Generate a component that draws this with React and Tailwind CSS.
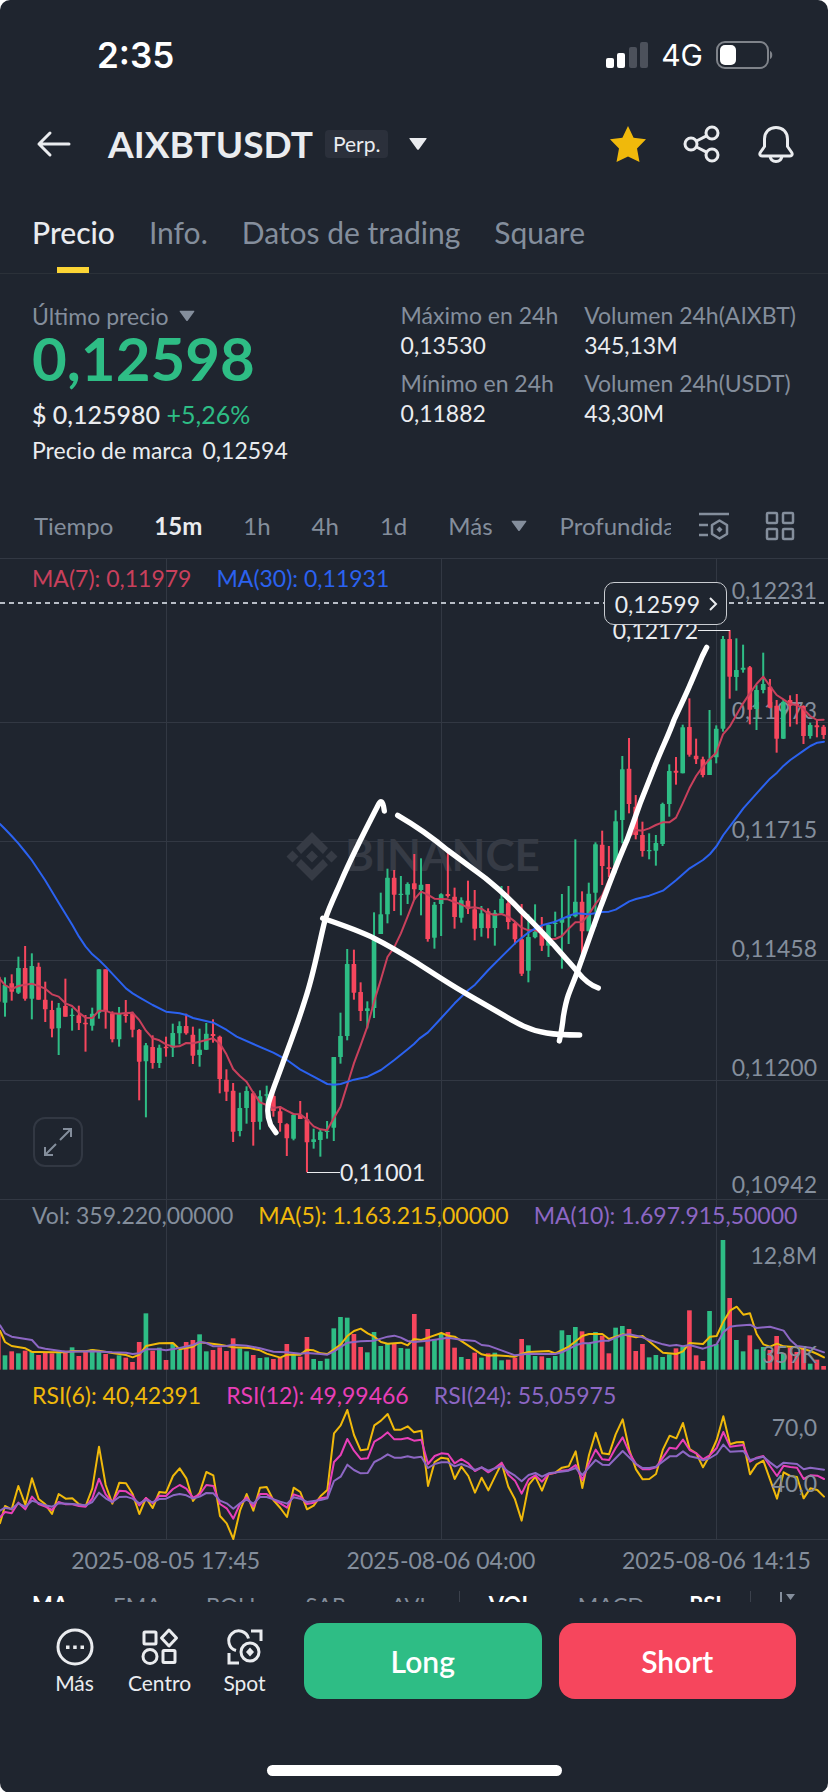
import React, { useState } from 'react';

const UP = '#2ebd85';
const DOWN = '#f6465d';
const YELLOW = '#f0b90b';
const PINK = '#e83fb8';
const PURPLE = '#8d67c4';

// Plot space is three units per pixel, one candle every STEP units
const STEP = 20.13;
const HALF = 1242;

// [high, body top, body bottom, low, rising, volume top]
const candles = [
  [337, 350, 425, 425, 0, 430], [352, 375, 428, 470, 1, 496], [343, 370, 395, 422, 0, 484], [290, 324, 398, 402, 1, 490],
  [258, 324, 416, 422, 0, 482], [280, 318, 416, 478, 1, 485], [308, 320, 419, 419, 0, 495], [365, 419, 448, 486, 0, 488],
  [422, 450, 506, 532, 0, 490], [429, 443, 505, 585, 1, 484], [356, 438, 470, 470, 0, 482], [445, 464, 468, 512, 1, 472],
  [437, 466, 489, 510, 0, 498], [465, 488, 493, 575, 0, 486], [443, 461, 497, 512, 1, 478], [328, 328, 458, 476, 1, 485],
  [328, 328, 454, 506, 0, 492], [454, 460, 538, 547, 0, 506], [441, 460, 538, 560, 1, 496], [420, 463, 468, 488, 0, 503],
  [455, 461, 509, 532, 0, 516], [507, 510, 605, 721, 0, 456], [549, 556, 604, 772, 1, 370], [526, 561, 609, 626, 0, 482],
  [554, 563, 609, 624, 1, 473], [530, 560, 565, 590, 0, 510], [491, 519, 563, 591, 1, 460], [484, 498, 520, 553, 1, 480],
  [461, 498, 520, 524, 0, 456], [500, 524, 587, 612, 0, 450], [506, 569, 585, 620, 1, 433], [489, 521, 569, 570, 1, 484],
  [478, 522, 528, 548, 0, 480], [527, 530, 657, 700, 0, 472], [628, 659, 695, 723, 0, 483], [669, 692, 815, 846, 0, 445],
  [698, 744, 813, 829, 1, 475], [679, 693, 744, 791, 1, 484], [694, 700, 786, 857, 0, 495], [691, 709, 785, 809, 1, 504],
  [677, 703, 707, 740, 1, 502], [700, 708, 753, 770, 0, 507], [738, 754, 789, 815, 0, 503], [790, 793, 835, 888, 0, 462],
  [760, 764, 836, 841, 1, 495], [723, 765, 777, 777, 0, 500], [758, 778, 847, 937, 0, 441], [806, 838, 846, 866, 1, 507],
  [808, 815, 840, 890, 1, 513], [783, 812, 816, 836, 1, 506], [591, 591, 803, 843, 1, 415], [458, 528, 591, 611, 1, 381],
  [267, 312, 528, 541, 1, 383], [269, 312, 398, 419, 0, 432], [367, 396, 453, 483, 0, 471], [424, 445, 453, 505, 1, 487],
  [157, 230, 444, 474, 1, 426], [98, 163, 222, 222, 1, 468], [26, 53, 163, 190, 1, 462], [30, 53, 104, 153, 0, 460],
  [48, 101, 105, 166, 1, 474], [67, 72, 104, 132, 1, 476], [-18, 70, 88, 120, 0, 372], [-5, 74, 90, 166, 1, 470],
  [72, 72, 237, 245, 0, 417], [126, 134, 233, 266, 1, 447], [100, 103, 132, 228, 1, 430], [-25, 102, 108, 113, 0, 426],
  [83, 110, 171, 206, 0, 473], [112, 121, 173, 188, 1, 501], [62, 122, 146, 162, 0, 507], [90, 148, 206, 241, 0, 488],
  [138, 160, 204, 230, 1, 503], [145, 154, 205, 235, 0, 490], [150, 158, 204, 257, 1, 488], [78, 116, 160, 163, 1, 511],
  [78, 130, 186, 208, 0, 509], [185, 190, 238, 253, 0, 503], [132, 238, 341, 348, 0, 447], [163, 231, 332, 367, 1, 466],
  [133, 216, 232, 235, 1, 498], [171, 215, 257, 273, 0, 499], [193, 195, 257, 291, 1, 504], [155, 188, 192, 230, 1, 498],
  [102, 176, 188, 326, 1, 421], [78, 168, 175, 252, 1, 435], [-62, 125, 169, 172, 1, 411], [94, 125, 214, 290, 0, 424],
  [68, 101, 214, 214, 1, 462], [-53, -47, 98, 200, 1, 426], [-88, -46, 18, 75, 0, 437], [-42, 22, 27, 52, 0, 490],
  [-149, -116, 20, 40, 1, 413], [-312, -272, -120, -50, 1, 408], [-366, -274, -168, -140, 0, 417], [-195, -160, -75, -62, 0, 483],
  [-115, -75, -27, -10, 0, 462], [-80, -30, -26, -2, 1, 502], [-75, -51, -28, 17, 1, 495], [-172, -168, -48, -42, 1, 501],
  [-287, -267, -168, -130, 1, 493], [-309, -268, -262, -226, 0, 475], [-406, -398, -260, -260, 1, 470], [-485, -399, -316, -310, 0, 361],
  [-364, -313, -302, -288, 0, 496], [-310, -302, -255, -248, 0, 513], [-450, -302, -255, -255, 1, 363], [-404, -394, -308, -290, 1, 462],
  [-672, -663, -394, -385, 1, 150], [-690, -663, -550, -484, 0, 324], [-665, -570, -549, -508, 1, 450], [-646, -577, -571, -562, 1, 484],
  [-582, -578, -451, -407, 0, 436], [-525, -510, -453, -390, 1, 478], [-622, -528, -510, -500, 1, 471], [-543, -520, -457, -455, 0, 480],
  [-480, -463, -364, -322, 0, 438], [-480, -475, -364, -363, 1, 491], [-494, -480, -463, -400, 0, 473], [-498, -468, -464, -407, 0, 486],
  [-464, -462, -372, -348, 0, 474], [-412, -405, -372, -364, 1, 521], [-420, -404, -398, -368, 0, 509], [-405, -400, -375, -363, 0, 528],
];

const ma7 = [
  352, 375, 387, 378, 374, 371, 378, 386, 403, 410, 430, 438, 458, 473, 474, 452, 452, 460, 461, 459, 458, 480, 512, 535, 541,
  553, 560, 559, 549, 550, 545, 540, 535, 550, 583, 627, 648, 665, 698, 727, 735, 744, 741, 752, 762, 763, 778, 799, 808, 811,
  775, 740, 675, 610, 556, 500, 425, 360, 291, 262, 220, 170, 118, 95, 104, 116, 117, 118, 126, 133, 143, 142, 146, 160, 165,
  162, 170, 185, 203, 211, 210, 222, 236, 237, 228, 206, 187, 186, 163, 132, 106, 60, 10, -20, -68, -90, -88, -95, -105, -113,
  -113, -127, -170, -215, -252, -280, -302, -322, -377, -400, -435, -470, -500, -528, -550, -522, -495, -482, -468, -465,
  -453, -432, -420, -421,
];

// Series are kept as the left and right halves of the plot
const ma30 = [
  '0,-108 15,-93 35,-72 55,-50 76,-24 95,0 135,60 176,128 217,195 237,230 257,260 277,283 297,300 317,320 378,385 398,400 418,412 458,435 498,455 539,460 559,465 579,474 640,488 680,510 710,530 760,552 820,578 861,600 900,628 941,650 982,672 1002,674 1022,672 1062,659 1103,650 1143,630 1183,600 1223,568',
  '0,552 16,536 42,517 82,474 122,430 163,390 183,374 223,330 263,290 303,250 344,217 364,205 384,196 424,185 464,168 485,160 505,161 525,163 565,156 585,155 605,149 646,124 666,117 706,107 747,92 787,60 827,25 867,0 888,-18 908,-42 928,-75 968,-128 988,-155 1028,-200 1068,-244 1089,-262 1109,-283 1129,-300 1169,-328 1189,-342 1210,-352 1230,-355',
];

const volMa5 = [
  '0,422 15,456 35,468 76,475 96,486 116,486 156,487 197,487 217,483 257,484 277,480 297,482 337,489 378,495 398,502 418,494 438,468 478,460 519,459 539,478 579,470 599,457 619,459 660,464 700,472 750,474 780,481 800,491 841,503 861,494 901,494 921,479 941,481 962,490 982,492 1022,464 1042,438 1062,423 1082,416 1103,430 1123,440 1143,456 1163,461 1203,458 1223,466',
  '0,447 22,450 42,443 82,429 102,437 122,440 203,493 223,497 243,496 303,500 323,491 344,486 404,483 424,490 464,470 505,438 525,432 565,432 585,447 605,440 626,433 666,442 686,438 747,488 787,492 807,484 827,459 867,462 888,440 908,438 928,395 948,362 968,350 988,374 1008,370 1028,432 1048,463 1068,470 1089,461 1109,469 1149,472 1189,483 1210,492 1230,502',
];

const volMa10 = [
  '0,406 15,430 35,440 96,450 116,472 136,476 197,485 277,484 337,487 378,488 398,492 418,490 438,478 478,478 498,481 539,474 579,465 599,456 619,459 640,469 680,468 700,464 740,467 780,475 820,485 861,487 901,491 921,489 962,492 982,494 1002,484 1042,458 1082,454 1123,452 1163,440 1183,437 1203,443 1223,453',
  '0,456 42,452 102,443 142,449 183,453 203,465 223,467 303,496 344,491 424,492 444,487 485,466 505,460 525,460 565,452 585,452 605,443 626,435 646,433 686,442 706,450 747,463 767,467 787,465 807,469 827,465 867,476 908,463 928,427 948,410 968,407 1008,404 1028,414 1068,410 1109,422 1129,450 1149,468 1189,473 1230,487',
];

const rsi6 = [
  '0,430 15,378 35,388 55,318 76,374 96,295 116,357 136,373 156,402 176,342 197,356 217,355 237,373 257,378 277,325 297,200 317,315 337,371 358,308 378,310 398,342 418,402 438,354 458,384 478,336 498,338 519,288 539,265 559,295 579,363 599,338 619,276 640,286 660,408 680,430 700,477 720,392 740,342 760,392 780,323 800,321 820,360 841,384 861,411 881,323 901,336 921,388 941,377 962,348 982,330 1002,160 1022,136 1042,90 1062,165 1082,211 1103,208 1123,136 1143,122 1163,102 1183,149 1203,149 1223,139',
  '0,157 22,152 42,318 62,246 82,233 102,236 122,297 142,260 163,288 183,338 203,293 223,331 243,290 263,250 283,320 303,358 323,422 344,315 364,290 384,332 404,282 424,278 444,263 464,259 485,214 505,324 525,225 545,158 565,220 585,223 605,163 626,118 646,210 666,268 686,298 706,297 726,282 747,208 767,167 787,175 807,129 827,207 847,220 867,262 888,225 908,180 928,109 948,193 968,187 988,186 1008,283 1028,253 1048,242 1068,298 1089,356 1109,277 1129,288 1149,291 1169,355 1189,325 1210,330 1230,350',
];

const rsi12 = [
  '0,412 15,396 35,400 55,368 76,388 96,350 116,372 136,380 156,390 176,366 197,373 217,373 237,378 257,380 277,355 297,296 317,343 337,367 358,332 378,334 398,348 418,376 438,354 458,370 478,347 498,348 519,327 539,315 559,326 579,353 599,343 619,315 640,318 660,372 680,385 700,416 720,372 740,352 760,380 780,342 800,342 820,358 841,370 861,383 881,343 901,350 921,372 941,368 962,355 982,352 1002,246 1022,225 1042,177 1062,212 1082,237 1103,235 1123,185 1143,173 1163,157 1183,178 1203,178 1223,174',
  '0,182 22,179 42,252 62,228 82,220 102,222 122,250 142,237 163,250 183,273 203,262 223,277 243,264 263,248 283,284 303,302 323,341 344,298 364,286 384,305 404,282 424,278 444,272 464,270 485,255 505,300 525,250 545,209 565,238 585,240 605,204 626,172 646,218 666,252 686,268 706,268 726,262 747,232 767,203 787,206 807,179 827,210 847,220 867,238 888,225 908,204 928,156 948,200 988,195 1008,245 1028,233 1048,228 1068,258 1089,288 1109,257 1129,261 1149,263 1169,297 1189,286 1210,287 1230,297',
];

const rsi24 = [
  '0,392 15,383 35,387 55,370 76,380 96,362 136,376 156,380 176,370 217,372 257,376 277,366 297,338 317,355 337,366 358,351 378,350 398,356 418,370 438,360 458,367 478,357 498,356 519,346 539,342 559,346 579,356 599,350 619,339 640,340 660,362 680,370 700,386 720,370 740,359 760,371 780,351 800,351 841,365 861,371 881,352 901,356 921,366 962,360 982,355 1002,303 1022,290 1042,254 1062,270 1082,280 1103,279 1123,246 1143,236 1163,223 1183,233 1203,233 1223,229',
  '0,233 22,230 42,264 62,252 82,247 102,247 122,259 142,252 163,260 183,270 203,262 223,272 263,258 283,275 303,287 323,304 344,285 364,279 384,290 404,280 464,272 485,264 505,285 525,262 545,240 565,254 585,255 626,213 666,252 686,264 706,264 726,260 767,229 787,229 807,214 827,229 847,233 867,241 888,234 908,222 928,194 948,215 988,213 1008,240 1048,230 1068,247 1089,263 1109,248 1149,252 1169,268 1189,263 1230,269',
];

const joinHalves = ([left, right]) => {
  const shifted = right.split(' ').map((p) => {
    const [x, y] = p.split(',').map(Number);
    return `${x + HALF},${y}`;
  });
  return `${left} ${shifted.join(' ')}`;
};

const candleX = (i) => 15 + (i - 1) * STEP;

const Line = ({ points, color }) => (
  <polyline points={points} fill="none" stroke={color} strokeWidth="6" strokeLinejoin="round" strokeLinecap="round" />
);

const VerticalGrid = ({ height }) => (
  <g stroke="#323843" strokeWidth="1">
    {[166, 441, 716].map((x) => (
      <line key={x} x1={x + 0.5} x2={x + 0.5} y1="0" y2={height} />
    ))}
  </g>
);

const Legend = ({ items, className }) => (
  <div className={`absolute left-8 flex gap-[25px] whitespace-nowrap text-[23px] leading-8 ${className}`}>
    {items.map((item) => (
      <span key={item.text} className={item.className}>{item.text}</span>
    ))}
  </div>
);

const Caret = ({ className }) => (
  <svg viewBox="0 0 18 14" className={className} fill="currentColor" aria-hidden="true">
    <path d="M1.2 1h15.6c.8 0 1 .6.6 1.1L9.8 12.4c-.4.6-1.2.6-1.6 0L.6 2.100C.2 1.600.4 1 1.200 1z" />
  </svg>
);

const StatusBar = () => (
  <div className="flex h-[110px] items-center justify-between pl-[97px] pr-[54px] text-white">
    <span className="font-[Inter,sans-serif] text-[35px] font-semibold leading-10">2:35</span>
    <div className="flex items-center gap-[13px]">
      <svg viewBox="0 0 42 28" className="h-7 w-[42px]" aria-label="Signal">
        <rect x="0" y="17" width="8" height="10" rx="2" fill="#fff" />
        <rect x="11" y="12" width="8" height="15" rx="2" fill="#fff" />
        <rect x="23" y="6" width="8" height="21" rx="2" fill="#4c515b" />
        <rect x="34" y="1" width="8" height="26" rx="2" fill="#4c515b" />
      </svg>
      <span className="font-[Inter,sans-serif] text-[30px] leading-8">4G</span>
      <svg viewBox="0 0 58 28" className="h-7 w-[58px]" aria-label="Battery">
        <rect x="1" y="1" width="51" height="26" rx="8" fill="none" stroke="#7f838a" strokeWidth="2" />
        <rect x="4" y="4" width="16" height="20" rx="5" fill="#fff" />
        <path d="M54 10c3 1 3 7 0 8z" fill="#7f838a" />
      </svg>
    </div>
  </div>
);

const Header = () => (
  <header className="flex h-[68px] items-center pl-9 pr-8 text-[#eaecef]">
    <button aria-label="Volver">
      <svg viewBox="0 0 36 28" className="h-7 w-9" fill="none" stroke="currentColor" strokeWidth="3" strokeLinecap="round" strokeLinejoin="round">
        <path d="M33 14H3M14 3L3 14l11 11" />
      </svg>
    </button>
    <h1 className="ml-9 text-[37px] font-bold leading-10">AIXBTUSDT</h1>
    <span className="ml-3 rounded bg-[#2b303b] px-2 text-[21px] leading-7">Perp.</span>
    <button className="ml-5" aria-label="Cambiar par">
      <Caret className="h-[14px] w-5" />
    </button>
    <div className="ml-auto flex items-center gap-[34px]">
      <button aria-label="Favorito">
        <svg viewBox="0 0 40 40" className="size-10" fill={YELLOW}>
          <path d="M20 2l5.600 11.800 12.400 1.500-9 9.300 2.500 13.400L20 32.500 8.500 38 11 24.600 2 15.300l12.400-1.500z" />
        </svg>
      </button>
      <button aria-label="Compartir">
        <svg viewBox="0 0 40 40" className="size-10" fill="none" stroke="currentColor" strokeWidth="3">
          <circle cx="30" cy="9" r="6" />
          <circle cx="9" cy="20" r="6" />
          <circle cx="30" cy="31" r="6" />
          <path d="M14.500 17l10-5.200M14.500 23l10 5.200" />
        </svg>
      </button>
      <button aria-label="Alertas">
        <svg viewBox="0 0 40 40" className="size-10" fill="none" stroke="currentColor" strokeWidth="3" strokeLinejoin="round">
          <path d="M20 3.500c-7 0-11.500 5-11.500 11.500v7.500L4.300 28.500c-1 1.600-.3 3.500 1.700 3.500h28c2 0 2.700-1.900 1.700-3.500l-4.200-6V15C31.500 8.500 27 3.500 20 3.500z" />
          <path d="M14 32c.5 3.500 3 5.500 6 5.500s5.500-2 6-5.500" />
        </svg>
      </button>
    </div>
  </header>
);

const Tabs = () => {
  const [active, setActive] = useState('Precio');
  return (
    <nav className="flex h-24 gap-[34px] border-b border-[#2b3139] px-8 text-[30px] leading-9">
      {['Precio', 'Info.', 'Datos de trading', 'Square'].map((tab) => (
        <button
          key={tab}
          onClick={() => setActive(tab)}
          className={`relative whitespace-nowrap pt-3 ${active === tab ? 'font-medium text-[#eaecef]' : 'text-[#848e9c]'}`}
        >
          {tab}
          {active === tab && <span className="absolute bottom-0 left-1/2 h-[6px] w-8 -translate-x-1/2 bg-[#fcd535]" />}
        </button>
      ))}
    </nav>
  );
};

const Stat = ({ label, value }) => (
  <div>
    <dt className="text-[#848e9c]">{label}</dt>
    <dd className="text-[#eaecef]">{value}</dd>
  </div>
);

const PriceSummary = () => (
  <section className="flex h-[220px] justify-between px-8 pt-[26px]">
    <div>
      <button className="flex items-center gap-[10px] text-[23px] leading-8 text-[#848e9c]">
        Último precio
        <Caret className="h-3 w-4" />
      </button>
      <p className="text-[60px] font-bold leading-[52px] text-[#2ebd85]">0,12598</p>
      <p className="mt-3 text-[25px] leading-9 text-[#eaecef]">
        <span className="font-medium">$ 0,125980</span> <span className="text-[#2ebd85]">+5,26%</span>
      </p>
      <p className="text-[23px] leading-9 text-[#eaecef]">
        Precio de marca <span className="ml-1">0,12594</span>
      </p>
    </div>
    <dl className="grid grid-cols-[auto_auto] content-start gap-x-[26px] gap-y-2 whitespace-nowrap text-[23px] leading-[30px]">
      <Stat label="Máximo en 24h" value="0,13530" />
      <Stat label="Volumen 24h(AIXBT)" value="345,13M" />
      <Stat label="Mínimo en 24h" value="0,11882" />
      <Stat label="Volumen 24h(USDT)" value="43,30M" />
    </dl>
  </section>
);

const IntervalBar = () => {
  const [active, setActive] = useState('15m');
  return (
    <div className="flex h-16 items-center gap-7 pl-[34px] pr-[33px] text-[24px] leading-8 text-[#848e9c]">
      <div className="flex min-w-0 flex-1 gap-[41px] overflow-hidden whitespace-nowrap">
        {['Tiempo', '15m', '1h', '4h', '1d'].map((item) => (
          <button key={item} onClick={() => setActive(item)} className={active === item ? 'font-bold text-[#eaecef]' : ''}>
            {item}
          </button>
        ))}
        <button className="flex items-center gap-[18px]">
          Más
          <Caret className="h-3 w-4" />
        </button>
        <button className="-ml-2">Profundidad</button>
      </div>
      <div className="flex gap-9">
        <button aria-label="Indicadores">
          <svg viewBox="0 0 30 30" className="size-[30px]" fill="none" stroke="currentColor" strokeWidth="2.500">
            <path d="M0 3h30M0 14h9M0 24h9" />
            <path d="M20.500 9.500l7.500 4.500v9l-7.500 4.500-7.500-4.500v-9z" strokeLinejoin="round" />
            <path d="M20.500 15.500l3 3-3 3-3-3z" fill="currentColor" stroke="none" />
          </svg>
        </button>
        <button aria-label="Diseño">
          <svg viewBox="0 0 30 30" className="size-[30px]" fill="none" stroke="currentColor" strokeWidth="2.500">
            <rect x="2" y="2" width="10" height="10" rx="1" />
            <rect x="18" y="2" width="10" height="10" rx="1" />
            <rect x="2" y="18" width="10" height="10" rx="1" />
            <rect x="18" y="18" width="10" height="10" rx="1" />
          </svg>
        </button>
      </div>
    </div>
  );
};

const gridRows = [
  { y: 0, label: '0,12231', labelY: 41 },
  { y: 164, label: '0,11973', labelY: 161 },
  { y: 283, label: '0,11715', labelY: 280 },
  { y: 402, label: '0,11458', labelY: 399 },
  { y: 522, label: '0,11200', labelY: 518 },
  { y: 641, label: '0,10942', labelY: 635 },
];

const PriceChart = () => (
  <div className="relative">
    <svg viewBox="0 0 828 642" className="block h-auto w-full">
      <VerticalGrid height={642} />
      <g stroke="#323843">
        {gridRows.map((row) => (
          <line key={row.y} x1="0" x2="828" y1={row.y + 0.5} y2={row.y + 0.5} />
        ))}
      </g>

      {/* Watermark */}
      <g fill="#363b45">
        <path d="M312 274l16 16-5 6-11-11-11 11-5-6zM312 323l16-16-5-6-11 11-11-11-5 6zM312 292.500l6 6-6 6-6-6zM292.500 292.500l6 6-6 6-6-6zM331.500 292.500l6 6-6 6-6-6z" />
        <text x="345" y="313" fontSize="44" fontWeight="700" className="font-[Lato,sans-serif]">BINANCE</text>
      </g>

      <g fill="#848e9c" fontSize="23" textAnchor="end">
        {gridRows.map((row) => (
          <text key={row.label} x="817" y={row.labelY}>{row.label}</text>
        ))}
      </g>

      <line x1="0" x2="828" y1="45" y2="45" stroke="#b7bdc6" strokeWidth="2" strokeDasharray="5 4" />

      <g transform="translate(0 302) scale(0.33333)">
        {candles.map(([high, top, bottom, low, rising], i) => (
          <g key={i} fill={rising ? UP : DOWN}>
            <rect x={candleX(i) - 3} y={high} width="6" height={low - high} />
            <rect x={candleX(i) - 7} y={top} width="14" height={bottom - top} rx="1" />
          </g>
        ))}
        <Line points={ma7.map((y, i) => `${candleX(i)},${y}`).join(' ')} color="#c9405c" />
        <Line points={joinHalves(ma30)} color="#2b62f0" />
      </g>

      <g stroke="#eaecef" fill="none">
        <path d="M307 614.500h33M698 72.500h32" />
      </g>
      <g fill="#eaecef" fontSize="23">
        <text x="340" y="623">0,11001</text>
        <text x="698" y="81" textAnchor="end">0,12172</text>
      </g>

      {/* Hand drawn trend strokes */}
      <g transform="translate(0 302) scale(0.33333)" fill="none" stroke="#fff" strokeWidth="16" strokeLinecap="round" strokeLinejoin="round">
        <path d="M1153 -147C1151 -162 1149 -172 1145 -174C1140 -177 1136 -168 1130 -156C1095 -88 1050 2 1025 60C1010 96 990 135 975 180C955 260 942 340 915 420C892 494 872 545 850 605C835 648 818 688 806 728C800 755 804 776 812 795L828 818" />
        <path d="M968 175C1030 196 1080 214 1123 235C1165 256 1205 280 1242 303C1300 340 1350 374 1402 403L1492 455C1555 492 1590 512 1640 519C1665 523 1700 525 1739 525" />
        <path d="M1193 -134C1260 -95 1300 -65 1342 -30C1385 2 1420 28 1457 55C1500 90 1535 122 1565 155C1600 188 1635 226 1662 255C1690 288 1712 310 1732 335C1752 360 1770 376 1795 384" />
        <path d="M1678 543C1684 515 1688 490 1690 470C1695 440 1698 425 1705 405C1716 376 1725 355 1734 330C1752 280 1780 200 1802 140C1825 80 1850 10 1882 -62C1910 -145 1935 -210 1962 -275C1985 -335 2005 -372 2022 -420C2040 -460 2060 -500 2072 -530L2107 -612L2120 -638" />
      </g>
    </svg>

    <Legend
      className="top-1"
      items={[
        { text: 'MA(7): 0,11979', className: 'text-[#c9405c]' },
        { text: 'MA(30): 0,11931', className: 'text-[#2b62f0]' },
      ]}
    />

    <button className="absolute right-[101px] top-6 flex h-[43px] items-center gap-2 rounded-[10px] border border-[#c9ccd1] bg-[#1f252f] pl-[10px] pr-2 text-[23px] leading-8 text-[#eaecef]">
      0,12599
      <svg viewBox="0 0 10 16" className="h-4 w-[10px]" fill="none" stroke="currentColor" strokeWidth="2">
        <path d="M2 2l6 6-6 6" />
      </svg>
    </button>

    <button aria-label="Pantalla completa" className="absolute bottom-[33px] left-[33px] flex size-[50px] items-center justify-center rounded-xl border-2 border-[#323843] text-[#848e9c]">
      <svg viewBox="0 0 30 30" className="size-[30px]" fill="none" stroke="currentColor" strokeWidth="2">
        <path d="M17 13L28 2M20 2h8v8M13 17L2 28M2 20v8h8" />
      </svg>
    </button>
  </div>
);

const VolumeChart = () => (
  <div className="relative">
    <svg viewBox="0 0 828 170" className="block h-auto w-full">
      <VerticalGrid height={170} />
      <g transform="translate(0 -10) scale(0.33333)">
        {candles.map(([, , , , rising, top], i) => (
          <rect key={i} x={candleX(i) - 7} y={top} width="14" height={539 - top} fill={rising ? UP : DOWN} />
        ))}
        <Line points={joinHalves(volMa5)} color={YELLOW} />
        <Line points={joinHalves(volMa10)} color={PURPLE} />
      </g>
      <g fill="#848e9c" fontSize="23" textAnchor="end">
        <text x="817" y="64">12,8M</text>
        <text x="817" y="163">359K</text>
      </g>
    </svg>
    <Legend
      className="-top-px"
      items={[
        { text: 'Vol: 359.220,00000', className: 'text-[#848e9c]' },
        { text: 'MA(5): 1.163.215,00000', className: 'text-[#f0b90b]' },
        { text: 'MA(10): 1.697.915,50000', className: 'text-[#8d67c4]' },
      ]}
    />
  </div>
);

const RsiChart = () => (
  <div className="relative">
    <svg viewBox="0 0 828 171" className="block h-auto w-full">
      <VerticalGrid height={170} />
      <line x1="0" x2="828" y1="169.500" y2="169.500" stroke="#323843" />
      <g transform="translate(0 10) scale(0.33333)">
        <Line points={joinHalves(rsi6)} color={YELLOW} />
        <Line points={joinHalves(rsi12)} color={PINK} />
        <Line points={joinHalves(rsi24)} color={PURPLE} />
      </g>
      <g fill="#848e9c" fontSize="23" textAnchor="end">
        <text x="817" y="66">70,0</text>
        <text x="817" y="122">40,0</text>
      </g>
    </svg>
    <Legend
      className="top-[9px]"
      items={[
        { text: 'RSI(6): 40,42391', className: 'text-[#f0b90b]' },
        { text: 'RSI(12): 49,99466', className: 'text-[#e83fb8]' },
        { text: 'RSI(24): 55,05975', className: 'text-[#8d67c4]' },
      ]}
    />
  </div>
);

const TimeAxis = () => (
  <div className="-mr-[26px] grid h-[38px] grid-cols-3 items-center pl-7 text-center text-[23px] leading-8 text-[#848e9c]">
    <span>2025-08-05 17:45</span>
    <span>2025-08-06 04:00</span>
    <span>2025-08-06 14:15</span>
  </div>
);

const IndicatorRow = () => (
  <div className="flex h-[23px] items-start justify-between overflow-hidden pl-8 pr-5 pt-3 text-[22px] leading-7 text-[#848e9c]">
    <div className="flex gap-[45px]">
      <button className="font-bold text-white">MA</button>
      <button>EMA</button>
      <button>BOLL</button>
      <button>SAR</button>
      <button>AVL</button>
    </div>
    <span className="h-7 w-px bg-[#3b414c]" />
    <div className="flex gap-[45px]">
      <button className="font-bold text-white">VOL</button>
      <button>MACD</button>
      <button className="font-bold text-white">RSI</button>
    </div>
    <span className="h-7 w-px bg-[#3b414c]" />
    <button aria-label="Ajustes">
      <svg viewBox="0 0 28 28" className="size-7" fill="currentColor">
        <path d="M0 1h2v24H0zM6 3h9l-4.500 6zM24 11h3v10h-3z" />
      </svg>
    </button>
  </div>
);

const navItems = [
  {
    label: 'Más',
    icon: (
      <>
        <circle cx="20" cy="20" r="17" />
        <path d="M11 18.500h3.500v3.500H11zM18.200 18.500h3.500v3.500h-3.500zM25.500 18.500H29v3.500h-3.500z" fill="currentColor" stroke="none" />
      </>
    ),
  },
  {
    label: 'Centro',
    icon: (
      <>
        <rect x="4" y="5" width="12" height="12" rx="1" />
        <path d="M29 3l7.500 8-7.500 8-7.500-8z" strokeLinejoin="round" />
        <circle cx="10" cy="29.500" r="7" />
        <rect x="23" y="23.500" width="12" height="12" rx="1" />
      </>
    ),
  },
  {
    label: 'Spot',
    icon: (
      <>
        <path d="M26 4h10v10M4 26v10h10" />
        <path d="M11 23.500A10 10 0 1 1 23.500 11.500" />
        <circle cx="25" cy="25" r="9" />
        <path d="M25 20.500l4 4.500-4 4.500-4-4.500z" fill="currentColor" stroke="none" />
      </>
    ),
  },
];

const BottomBar = () => (
  <footer className="flex items-start gap-[17px] px-8 pt-[21px]">
    <nav className="flex w-[255px] pt-1 text-[#eaecef]">
      {navItems.map((item) => (
        <button key={item.label} className="flex flex-1 flex-col items-center text-[21px] leading-8">
          <svg viewBox="0 0 40 40" className="size-10" fill="none" stroke="currentColor" strokeWidth="3">{item.icon}</svg>
          {item.label}
        </button>
      ))}
    </nav>
    <div className="flex flex-1 gap-[17px] text-[30px] font-semibold text-white">
      <button className="h-[76px] flex-1 rounded-2xl bg-[#2ebd85]">Long</button>
      <button className="h-[76px] flex-1 rounded-2xl bg-[#f6465d]">Short</button>
    </div>
  </footer>
);

const App = () => (
  <div className="bg-white">
    <main className="overflow-hidden rounded-[10px] bg-[#1f252f] pb-[17px] font-[Lato,'Noto_Sans',sans-serif]">
      <StatusBar />
      <Header />
      <Tabs />
      <PriceSummary />
      <IntervalBar />
      <PriceChart />
      <VolumeChart />
      <RsiChart />
      <TimeAxis />
      <IndicatorRow />
      <BottomBar />
      <div className="mx-auto mt-[66px] h-[11px] w-[295px] rounded-full bg-white" />
    </main>
  </div>
);

export default App;
